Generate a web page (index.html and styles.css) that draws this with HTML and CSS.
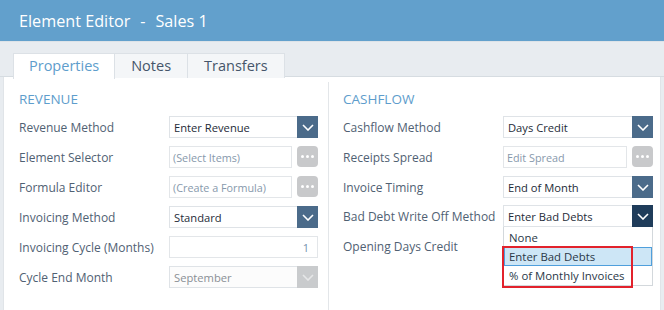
FILE: index.html
```html
<!DOCTYPE html>
<html lang="en">
<head>
    <meta charset="UTF-8">
    <title>Element Editor - Sales 1</title>
    <link rel="stylesheet" href="styles.css">
</head>
<body>

<!-- Window title -->
<div class="title-bar">Element Editor<span class="sep">-</span>Sales 1</div>

<!-- Tabs -->
<div class="tab-strip">
    <div class="tab active">Properties</div>
    <div class="tab">Notes</div>
    <div class="tab">Transfers</div>
</div>

<div class="panel">
    <!-- Revenue column -->
    <div class="section revenue">
        <div class="section-title">REVENUE</div>

        <div class="row">
            <span class="label">Revenue Method</span>
            <div class="select">
                <span class="value">Enter Revenue</span>
                <span class="drop-btn"><svg width="12" height="7" viewBox="0 0 12 7"><path d="M1 1l5 5 5-5" fill="none" stroke="#fff" stroke-width="1.6"/></svg></span>
            </div>
        </div>

        <div class="row">
            <span class="label">Element Selector</span>
            <div class="picker">
                <span class="field placeholder">(Select Items)</span>
                <span class="dots-btn"><i></i><i></i><i></i></span>
            </div>
        </div>

        <div class="row">
            <span class="label">Formula Editor</span>
            <div class="picker">
                <span class="field placeholder">(Create a Formula)</span>
                <span class="dots-btn"><i></i><i></i><i></i></span>
            </div>
        </div>

        <div class="row">
            <span class="label">Invoicing Method</span>
            <div class="select">
                <span class="value">Standard</span>
                <span class="drop-btn"><svg width="12" height="7" viewBox="0 0 12 7"><path d="M1 1l5 5 5-5" fill="none" stroke="#fff" stroke-width="1.6"/></svg></span>
            </div>
        </div>

        <div class="row">
            <span class="label">Invoicing Cycle (Months)</span>
            <div class="number-field">1</div>
        </div>

        <div class="row">
            <span class="label">Cycle End Month</span>
            <div class="select disabled">
                <span class="value">September</span>
                <span class="drop-btn"><svg width="12" height="7" viewBox="0 0 12 7"><path d="M1 1l5 5 5-5" fill="none" stroke="#e6e7e8" stroke-width="1.6"/></svg></span>
            </div>
        </div>
    </div>

    <!-- Cashflow column -->
    <div class="section cashflow">
        <div class="section-title">CASHFLOW</div>

        <div class="row">
            <span class="label">Cashflow Method</span>
            <div class="select">
                <span class="value">Days Credit</span>
                <span class="drop-btn"><svg width="12" height="7" viewBox="0 0 12 7"><path d="M1 1l5 5 5-5" fill="none" stroke="#fff" stroke-width="1.6"/></svg></span>
            </div>
        </div>

        <div class="row">
            <span class="label">Receipts Spread</span>
            <div class="picker">
                <span class="field placeholder">Edit Spread</span>
                <span class="dots-btn"><i></i><i></i><i></i></span>
            </div>
        </div>

        <div class="row">
            <span class="label">Invoice Timing</span>
            <div class="select">
                <span class="value">End of Month</span>
                <span class="drop-btn"><svg width="12" height="7" viewBox="0 0 12 7"><path d="M1 1l5 5 5-5" fill="none" stroke="#fff" stroke-width="1.6"/></svg></span>
            </div>
        </div>

        <div class="row tight">
            <span class="label">Bad Debt Write Off Method</span>
            <div class="select open">
                <span class="value">Enter Bad Debts</span>
                <span class="drop-btn"><svg width="12" height="7" viewBox="0 0 12 7"><path d="M1 1l5 5 5-5" fill="none" stroke="#fff" stroke-width="1.6"/></svg></span>

                <!-- open dropdown list -->
                <ul class="drop-list">
                    <li>None</li>
                    <li class="selected">Enter Bad Debts</li>
                    <li>% of Monthly Invoices</li>
                </ul>
                <div class="callout"></div>
            </div>
        </div>

        <div class="row">
            <span class="label">Opening Days Credit</span>
        </div>
    </div>
</div>

</body>
</html>
```

FILE: styles.css
```css
body {
    margin: 0;
    padding: 0;
    font-family: 'Open Sans', sans-serif;
    background-color: #e8ecf0;
    width: 664px;
    height: 310px;
    overflow: hidden;
}

/* Header bar */
.title-bar {
    height: 42px;
    line-height: 43px;
    padding-left: 19px;
    background-color: #62a0cc;
    color: #fff;
    font-size: 16.2px;
    border-bottom: 1px solid #dde3e8;
    box-sizing: border-box;
}

.title-bar .sep {
    margin: 0 10px;
}

/* Tabs */
.tab-strip {
    display: flex;
    padding: 11px 0 0 13px;
    height: 35px;
    box-sizing: border-box;
    border-bottom: 1px solid #d6dce1;
}

.tab {
    height: 24px;
    line-height: 24px;
    padding: 0 16px;
    font-size: 14.5px;
    color: #45556a;
    background-color: #f4f6f8;
    border: 1px solid #dce1e6;
    border-bottom: none;
    margin-right: -1px;
}

.tab.active {
    height: 25px;
    padding: 0 15px;
    color: #5e9dcc;
    background-color: #fff;
    position: relative;
    z-index: 1;
}

/* Main panel */
.panel {
    display: grid;
    grid-template-columns: 324px 1fr;
    margin: 0 3px;
    padding-top: 5px;
    height: 240px;
    background-color: #fff;
    border-left: 1px solid #e0e4e8;
    border-right: 1px solid #e0e4e8;
}

.section {
    padding-top: 8px;
}

.revenue {
    padding-left: 15px;
}

.cashflow {
    padding-left: 14px;
    border-left: 1px solid #e3e6e9;
}

.section-title {
    font-size: 13.5px;
    line-height: 18px;
    color: #5e9dcc;
    margin-bottom: 8px;
}

.row {
    display: grid;
    align-items: center;
    height: 22px;
    margin-bottom: 8px;
}

.revenue .row {
    grid-template-columns: 150px 149px;
}

.cashflow .row {
    grid-template-columns: 160px 150px;
}

.row.tight {
    margin-top: -1px;
}

.label {
    font-size: 12px;
    color: #506173;
    white-space: nowrap;
}

/* Select boxes */
.select {
    display: flex;
    height: 22px;
    position: relative;
}

.select .value {
    flex: 1;
    border: 1px solid #dfe3e7;
    border-right: none;
    font-size: 11.2px;
    line-height: 21px;
    padding-left: 4px;
    color: #1e2b38;
}

.drop-btn {
    width: 21px;
    height: 22px;
    background-color: #4b6b8a;
    display: flex;
    align-items: center;
    justify-content: center;
}

.select.open .drop-btn {
    background-color: #1f3c5a;
}

.select.disabled .value {
    color: #8a8f95;
    background-color: #fcfcfc;
}

.select.disabled .drop-btn {
    background-color: #c9cbcd;
}

/* Input with ellipsis button */
.picker {
    display: flex;
    height: 22px;
}

.field {
    flex: 1;
    border: 1px solid #e3e6e9;
    font-size: 10.8px;
    line-height: 21px;
    padding-left: 3px;
    margin-right: 5px;
}

.placeholder {
    color: #8799ac;
}

.dots-btn {
    width: 21px;
    height: 21px;
    border-radius: 4px;
    background-color: #c8c9cb;
    display: flex;
    align-items: center;
    justify-content: center;
    gap: 2px;
}

.dots-btn i {
    width: 3px;
    height: 3px;
    border-radius: 50%;
    background-color: #fff;
}

.number-field {
    border: 1px solid #e3e6e9;
    height: 20px;
    line-height: 21px;
    font-size: 11px;
    text-align: right;
    padding-right: 8px;
    color: #7590ad;
}

/* Open dropdown */
.drop-list {
    position: absolute;
    top: 22px;
    left: 0;
    width: 148px;
    margin: 0;
    padding: 0;
    list-style: none;
    background-color: #fff;
    border: 1px solid #d3d8dc;
    border-top: none;
    z-index: 2;
}

.drop-list li {
    height: 19px;
    line-height: 19px;
    padding-left: 5px;
    font-size: 11.4px;
    color: #2a3848;
}

.drop-list li:first-child {
    height: 20px;
    line-height: 21px;
}

.drop-list li.selected {
    height: 17px;
    line-height: 18px;
    background-color: #cde6f6;
    border: 1px solid #4f9fdc;
    padding-left: 4px;
}

.callout {
    position: absolute;
    left: -1px;
    top: 41px;
    width: 127px;
    height: 38px;
    border: 2px solid #e2222c;
    z-index: 3;
}
```
